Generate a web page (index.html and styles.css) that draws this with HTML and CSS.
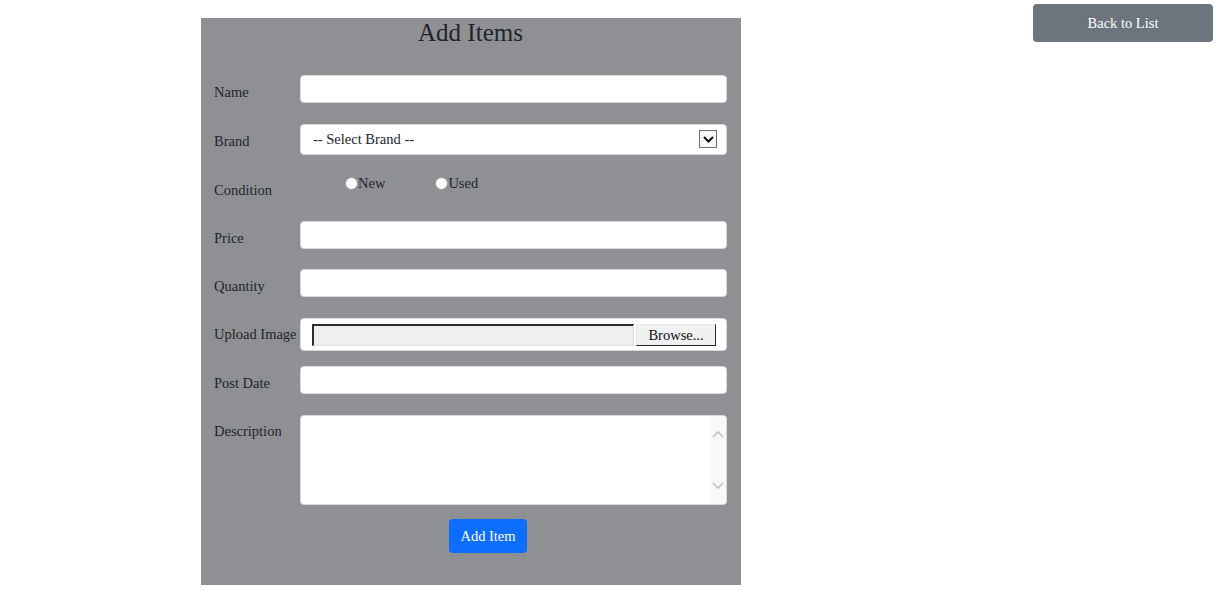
FILE: index.html
```html
<!DOCTYPE html>
<html lang="en">
<head>
<meta charset="utf-8">
<title>Add Items</title>
<link rel="stylesheet" href="styles.css">
</head>
<body>
<div class="page">
  <main class="panel">
    <h1 class="title">Add Items</h1>
    <form class="form">
      <div class="row row-name">
        <label class="lbl" for="name">Name</label>
        <input class="field" id="name" type="text">
      </div>
      <div class="row">
        <label class="lbl lbl-brand" for="brand">Brand</label>
        <div class="select-wrap">
          <select class="field select" id="brand">
            <option>-- Select Brand --</option>
          </select>
          <span class="select-arrow">
            <svg width="11" height="7" viewBox="0 0 11 7"><path d="M1 1 L5.5 5.5 L10 1" fill="none" stroke="#111" stroke-width="2"/></svg>
          </span>
        </div>
      </div>
      <div class="row row-cond">
        <span class="lbl lbl-cond">Condition</span>
        <div class="radios">
          <label class="radio-opt"><input type="radio" name="cond" class="radio">New</label>
          <label class="radio-opt radio-used"><input type="radio" name="cond" class="radio">Used</label>
        </div>
      </div>
      <div class="row">
        <label class="lbl" for="price">Price</label>
        <input class="field" id="price" type="text">
      </div>
      <div class="row">
        <label class="lbl" for="qty">Quantity</label>
        <input class="field" id="qty" type="text">
      </div>
      <div class="row row-upload">
        <span class="lbl lbl-upload">Upload Image</span>
        <div class="file-box">
          <span class="file-path"></span>
          <button type="button" class="browse">Browse...</button>
        </div>
      </div>
      <div class="row">
        <label class="lbl" for="date">Post Date</label>
        <input class="field" id="date" type="text">
      </div>
      <div class="row row-desc">
        <label class="lbl lbl-desc" for="desc">Description</label>
        <div class="ta-wrap">
          <textarea class="ta" id="desc"></textarea>
          <div class="scrollbar">
            <svg width="12" height="8" viewBox="0 0 12 8"><path d="M1 7 L6 2 L11 7" fill="none" stroke="#c3c3c3" stroke-width="1.6"/></svg>
            <svg width="12" height="8" viewBox="0 0 12 8"><path d="M1 1 L6 6 L11 1" fill="none" stroke="#c3c3c3" stroke-width="1.6"/></svg>
          </div>
        </div>
      </div>
      <div class="row row-submit">
        <span></span>
        <div><button type="button" class="btn-add">Add Item</button></div>
      </div>
    </form>
  </main>
  <a class="btn-back" href="#">Back to List</a>
</div>
</body>
</html>
```

FILE: styles.css
```css
* { box-sizing: border-box; }
html, body { margin: 0; padding: 0; background: #fff; }
body {
  font-family: "Liberation Serif", "Times New Roman", serif;
  font-size: 14.5px;
  color: #212529;
}
.page {
  display: flex;
  align-items: flex-start;
  padding: 4px 5px 0 201px;
}
.panel {
  width: 540px;
  height: 567px;
  margin-top: 14px;
  background: #8f9094;
  padding: 0 14px 0 13px;
}
.title {
  margin: 0;
  font-size: 25px;
  font-weight: normal;
  line-height: 30px;
  text-align: center;
  color: #212529;
}
.form {
  display: flex;
  flex-direction: column;
  gap: 20px;
  padding-top: 27px;
}
.row {
  display: grid;
  grid-template-columns: 86px 427px;
  align-items: center;
}
.row-name + .row { margin-top: 1px; }
.lbl {
  padding-top: 6px;
  white-space: nowrap;
}
.lbl-brand { padding-top: 3px; }
.lbl-upload { padding-top: 0; }
.field {
  width: 100%;
  height: 28px;
  background: #fff;
  border: 1px solid #d7d9dc;
  border-radius: 4px;
  font: inherit;
  color: #212529;
  padding: 0 12px;
  outline: none;
}
.select-wrap { position: relative; }
.select {
  height: 31px;
  appearance: none;
  -webkit-appearance: none;
  padding-left: 12px;
  padding-bottom: 1px;
}
.select-arrow {
  position: absolute;
  right: 10px;
  top: 6px;
  width: 18px;
  height: 18px;
  border: 1px solid #6e6e6e;
  background: #f6f6f6;
  display: flex;
  align-items: center;
  justify-content: center;
  pointer-events: none;
}
.row-cond {
  height: 24px;
  margin-top: 1px;
  align-items: stretch;
}
.lbl-cond { padding-top: 0; align-self: end; line-height: 17px; margin-bottom: 1px; }
.radios {
  display: flex;
  align-items: flex-start;
  padding-left: 45px;
  line-height: 15px;
}
.radio-opt {
  display: flex;
  align-items: center;
}
.radio-used { margin-left: 50px; }
.radio {
  appearance: none;
  -webkit-appearance: none;
  width: 13px;
  height: 13px;
  margin: 0;
  border-radius: 50%;
  background: #fff;
  border: 1px solid #9a9a9a;
}
.row-upload + .row { margin-top: -5px; }
.row-cond + .row { margin-top: 1px; }
.row-upload { margin-top: 1px; }
.file-box {
  height: 33px;
  background: #fff;
  border: 1px solid #d7d9dc;
  border-radius: 4px;
  display: flex;
  align-items: center;
  padding: 0 10px 0 11px;
  gap: 2px;
}
.file-path {
  flex: 1;
  height: 22px;
  background: #efefef;
  border-top: 2px solid #2b2b2b;
  border-left: 2px solid #2b2b2b;
  border-right: 1px solid #dcdcdc;
  border-bottom: 1px solid #dcdcdc;
}
.browse {
  width: 80px;
  height: 22px;
  font: inherit;
  color: #111;
  background: #f0f0f0;
  border: 1px solid #f0f0f0;
  border-right-color: #2b2b2b;
  border-bottom-color: #2b2b2b;
  border-top-color: #e6e6e6;
  border-left-color: #e6e6e6;
  padding: 0;
  line-height: 18px;
}
.row-desc { align-items: start; margin-top: 1px; }
.lbl-desc { padding-top: 8px; }
.ta-wrap {
  height: 90px;
  background: #fff;
  border: 1px solid #d7d9dc;
  border-radius: 4px;
  display: flex;
  overflow: hidden;
}
.ta {
  flex: 1;
  border: 0;
  resize: none;
  outline: none;
  font: inherit;
  padding: 6px 12px;
  background: #fff;
}
.scrollbar {
  width: 16px;
  background: #f8f8f8;
  display: flex;
  flex-direction: column;
  align-items: center;
  justify-content: space-between;
  padding: 14px 0 14px;
}
.row-submit { margin-top: -6px; }
.btn-add {
  margin-left: 149px;
  width: 78px;
  height: 34px;
  background: #0d6efd;
  color: #fff;
  border: 0;
  border-radius: 4px;
  font: inherit;
  padding: 0;
}
.btn-back {
  margin-left: auto;
  width: 180px;
  height: 38px;
  background: #6c757d;
  color: #fff;
  border-radius: 4px;
  text-decoration: none;
  display: flex;
  align-items: center;
  justify-content: center;
}
```
